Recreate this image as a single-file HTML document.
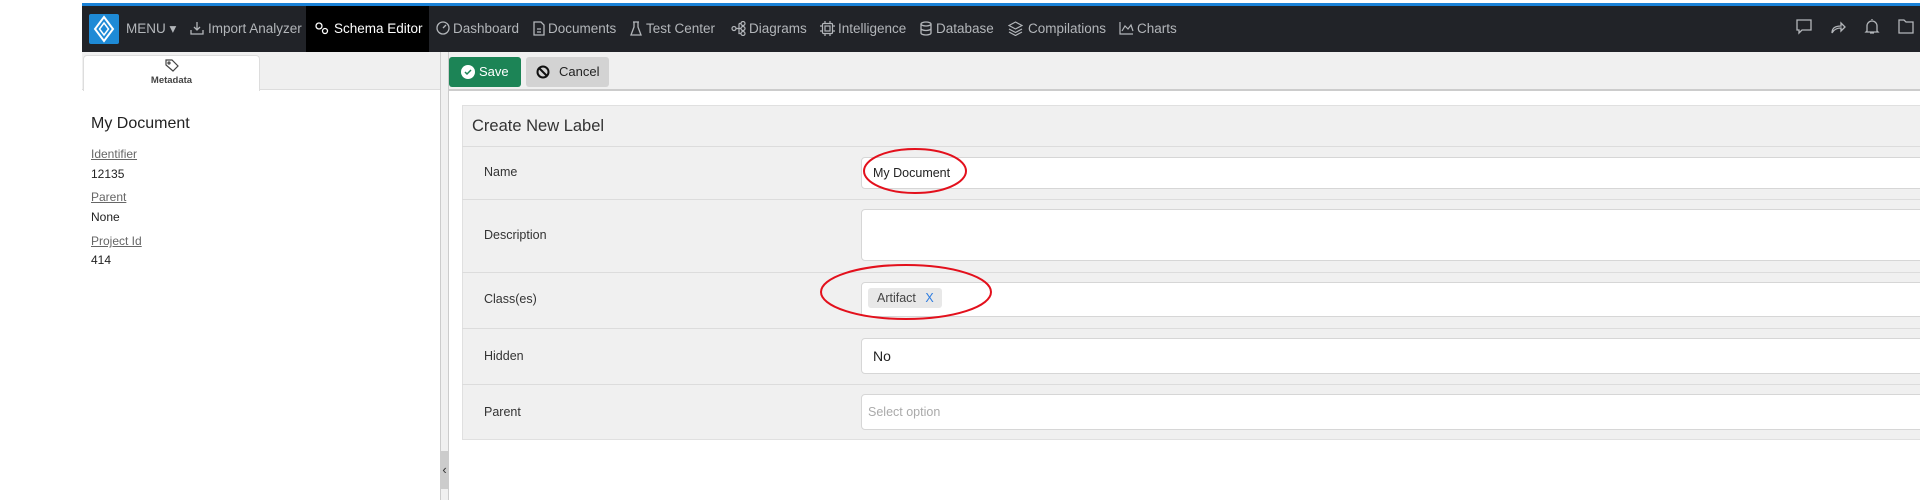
<!DOCTYPE html>
<html><head><style>
*{margin:0;padding:0;box-sizing:border-box}
body{width:1920px;height:500px;overflow:hidden;background:#fff;font-family:"Liberation Sans",sans-serif;position:relative}
.a{position:absolute}
.nav{left:82px;top:6px;width:1838px;height:46px;background:#212328}
.blue{left:82px;top:3px;width:1838px;height:3px;background:#1a82d8}
.ni{position:absolute;top:0;height:46px;line-height:46px;color:#b3b6ba;font-size:13.5px;white-space:nowrap}
.ni svg{position:absolute;top:15px}
.lbl{position:absolute;left:484px;font-size:12.5px;color:#333}
.inp{position:absolute;left:861px;width:1070px;background:#fff;border:1px solid #d6d6d6;border-radius:4px}
.row{position:absolute;left:462px;width:1470px;border-top:1px solid #dcdcdc}
</style></head><body>
<div class="a blue"></div>
<div class="a nav">
 <div class="a" style="left:7px;top:8px;width:30px;height:30px;background:#1e8ad6;border-radius:2px">
  <svg width="30" height="30" viewBox="0 0 30 30"><path d="M15 3 L24 15 L15 27 L6 15 Z" fill="none" stroke="#fff" stroke-width="2"/><path d="M15 9 L19.5 15 L15 21 L10.5 15 Z" fill="none" stroke="#fff" stroke-width="1.5"/></svg>
 </div>
 <div class="ni" style="left:44px">MENU ▾</div>
 <div class="ni" style="left:108px"><svg width="14" height="14" viewBox="0 0 14 14" fill="none" stroke="#b3b6ba" stroke-width="1.3"><path d="M7 1v8M4 6l3 3 3-3M1 9v4h12V9"/></svg><span style="margin-left:18px">Import Analyzer</span></div>
 <div class="ni" style="left:224px;width:123px;background:#000;color:#fff;padding-left:8px"><svg width="16" height="14" viewBox="0 0 16 14" fill="none" stroke="#fff" stroke-width="1.3" style="left:8px"><circle cx="5" cy="5" r="3"/><circle cx="11" cy="10" r="2.5"/></svg><span style="margin-left:20px">Schema Editor</span></div>
 <div class="ni" style="left:354px"><svg width="14" height="14" viewBox="0 0 14 14" fill="none" stroke="#b3b6ba" stroke-width="1.3"><circle cx="7" cy="7" r="6"/><path d="M7 7l3-3"/></svg><span style="margin-left:17px">Dashboard</span></div>
 <div class="ni" style="left:451px"><svg width="12" height="15" viewBox="0 0 12 15" fill="none" stroke="#b3b6ba" stroke-width="1.3"><path d="M1 1h7l3 3v10H1z M4 8h4M4 11h4"/></svg><span style="margin-left:15px">Documents</span></div>
 <div class="ni" style="left:548px"><svg width="12" height="15" viewBox="0 0 12 15" fill="none" stroke="#b3b6ba" stroke-width="1.3"><path d="M4 1v5L1 14h10L8 6V1M3 1h6"/></svg><span style="margin-left:16px">Test Center</span></div>
 <div class="ni" style="left:649px"><svg width="15" height="15" viewBox="0 0 15 15" fill="none" stroke="#b3b6ba" stroke-width="1.2"><circle cx="3" cy="7.5" r="2"/><circle cx="12" cy="2.5" r="2"/><circle cx="12" cy="7.5" r="2"/><circle cx="12" cy="12.5" r="2"/><path d="M5 7.5h5M8 2.5v10h2M8 2.5h2"/></svg><span style="margin-left:18px">Diagrams</span></div>
 <div class="ni" style="left:738px"><svg width="15" height="15" viewBox="0 0 15 15" fill="none" stroke="#b3b6ba" stroke-width="1.2"><rect x="2.5" y="2.5" width="10" height="10" rx="1"/><rect x="5" y="5" width="5" height="5"/><path d="M5 0v2.5M10 0v2.5M5 12.5V15M10 12.5V15M0 5h2.5M0 10h2.5M12.5 5H15M12.5 10H15"/></svg><span style="margin-left:18px">Intelligence</span></div>
 <div class="ni" style="left:838px"><svg width="12" height="15" viewBox="0 0 12 15" fill="none" stroke="#b3b6ba" stroke-width="1.3"><ellipse cx="6" cy="3" rx="5" ry="2"/><path d="M1 3v9c0 1 2 2 5 2s5-1 5-2V3M1 7.5c0 1 2 2 5 2s5-1 5-2"/></svg><span style="margin-left:16px">Database</span></div>
 <div class="ni" style="left:926px"><svg width="15" height="15" viewBox="0 0 15 15" fill="none" stroke="#b3b6ba" stroke-width="1.2"><path d="M7.5 1L14 4.5 7.5 8 1 4.5z M1 8l6.5 3.5L14 8M1 11l6.5 3.5L14 11"/></svg><span style="margin-left:20px">Compilations</span></div>
 <div class="ni" style="left:1037px"><svg width="15" height="14" viewBox="0 0 15 14" fill="none" stroke="#b3b6ba" stroke-width="1.2"><path d="M1 1v12h13M3 10l3-5 3 3 3-4 2 6"/></svg><span style="margin-left:18px">Charts</span></div>
 <svg class="a" style="left:1714px;top:13px" width="16" height="16" viewBox="0 0 16 16" fill="none" stroke="#b3b6ba" stroke-width="1.3"><path d="M1 1h14v10H6l-3 3v-3H1z"/></svg>
 <svg class="a" style="left:1748px;top:13px" width="16" height="16" viewBox="0 0 16 16" fill="none" stroke="#b3b6ba" stroke-width="1.3"><path d="M2 14c0-5 3-7 9-7V4l4 4-4 4V9c-4 0-7 1-9 5z"/></svg>
 <svg class="a" style="left:1782px;top:12px" width="16" height="17" viewBox="0 0 16 17" fill="none" stroke="#b3b6ba" stroke-width="1.3"><path d="M8 1v1M3 13V8a5 5 0 0 1 10 0v5l1 1H2z M6 15h4"/></svg>
 <svg class="a" style="left:1816px;top:13px" width="16" height="15" viewBox="0 0 16 15" fill="none" stroke="#b3b6ba" stroke-width="1.3"><path d="M1 1h5l2 2h7v11H1z"/></svg>
</div>
<!-- left panel -->
<div class="a" style="left:82px;top:52px;width:358px;height:38px;background:#f0f0f0;border-bottom:1px solid #ddd"></div>
<div class="a" style="left:83px;top:55px;width:177px;height:36px;background:#fff;border:1px solid #ddd;border-bottom:none;border-radius:4px 4px 0 0;text-align:center">
 <svg style="margin-top:3px" width="14" height="13" viewBox="0 0 14 13" fill="none" stroke="#444" stroke-width="1.2"><path d="M1 1h6l6 6-5 5-7-6z"/><circle cx="4" cy="4" r="1"/></svg>
 <div style="font-size:9.5px;font-weight:bold;color:#444;margin-top:-2px">Metadata</div>
</div>
<div class="a" style="left:91px;top:115px;font-size:16px;color:#222">My Document</div>
<div class="a" style="left:91px;top:147px;font-size:12px;color:#666;text-decoration:underline">Identifier</div>
<div class="a" style="left:91px;top:167px;font-size:12px;color:#222">12135</div>
<div class="a" style="left:91px;top:190px;font-size:12px;color:#666;text-decoration:underline">Parent</div>
<div class="a" style="left:91px;top:210px;font-size:12px;color:#222">None</div>
<div class="a" style="left:91px;top:234px;font-size:12px;color:#666;text-decoration:underline">Project Id</div>
<div class="a" style="left:91px;top:253px;font-size:12px;color:#222">414</div>
<div class="a" style="left:440px;top:52px;width:9px;height:448px;background:#f0f0f0;border-left:1px solid #ccc;border-right:1px solid #ccc"></div>
<div class="a" style="left:440px;top:451px;width:9px;height:38px;background:#ccc;font-size:13px;line-height:38px;color:#333;text-align:center">‹</div>
<!-- toolbar -->
<div class="a" style="left:449px;top:52px;width:1471px;height:39px;background:#f0f0f0;border-bottom:2px solid #ccc"></div>
<div class="a" style="left:449px;top:57px;width:72px;height:30px;background:#1c8456;border-radius:3px;color:#fff;font-size:13px;line-height:30px;padding-left:30px">Save
 <svg class="a" style="left:12px;top:8px" width="14" height="14" viewBox="0 0 14 14"><circle cx="7" cy="7" r="7" fill="#fff"/><path d="M4 7l2 2 4-4" fill="none" stroke="#1c8456" stroke-width="1.5"/></svg></div>
<div class="a" style="left:526px;top:57px;width:83px;height:30px;background:#d3d3d3;border-radius:3px;color:#222;font-size:13px;line-height:30px;padding-left:33px">Cancel
 <svg class="a" style="left:10px;top:8px" width="14" height="14" viewBox="0 0 14 14" fill="none" stroke="#111" stroke-width="2"><circle cx="7" cy="7" r="5.5"/><path d="M3 3l8 8"/></svg></div>
<!-- form -->
<div class="a" style="left:462px;top:105px;width:1470px;height:335px;background:#f0f0f0;border:1px solid #e0e0e0"></div>
<div class="a" style="left:472px;top:117px;font-size:16.5px;color:#333">Create New Label</div>
<div class="row" style="top:146px"></div><div class="row" style="top:199px"></div><div class="row" style="top:272px"></div><div class="row" style="top:328px"></div><div class="row" style="top:384px"></div>
<div class="lbl" style="top:165px">Name</div>
<div class="lbl" style="top:228px">Description</div>
<div class="lbl" style="top:292px">Class(es)</div>
<div class="lbl" style="top:349px">Hidden</div>
<div class="lbl" style="top:405px">Parent</div>
<div class="inp" style="top:157px;height:32px;font-size:12.5px;line-height:30px;padding-left:11px;color:#222">My Document</div>
<div class="inp" style="top:209px;height:52px"></div>
<div class="inp" style="top:282px;height:35px"><div class="a" style="left:6px;top:5px;width:74px;height:20px;background:#e8e8e8;border-radius:3px;font-size:12.5px;line-height:20px;padding-left:9px;color:#444">Artifact <span style="color:#2f7de0;margin-left:6px">X</span></div></div>
<div class="inp" style="top:338px;height:36px;font-size:14px;line-height:34px;padding-left:11px;color:#222">No</div>
<div class="inp" style="top:394px;height:36px;font-size:12.5px;line-height:34px;padding-left:6px;color:#aaa">Select option</div>
<svg class="a" style="left:0;top:0" width="1920" height="500"><ellipse cx="915" cy="171" rx="51" ry="22" fill="none" stroke="#e3101c" stroke-width="2"/><ellipse cx="906" cy="292" rx="85" ry="27" fill="none" stroke="#e3101c" stroke-width="2"/></svg>
</body></html>
